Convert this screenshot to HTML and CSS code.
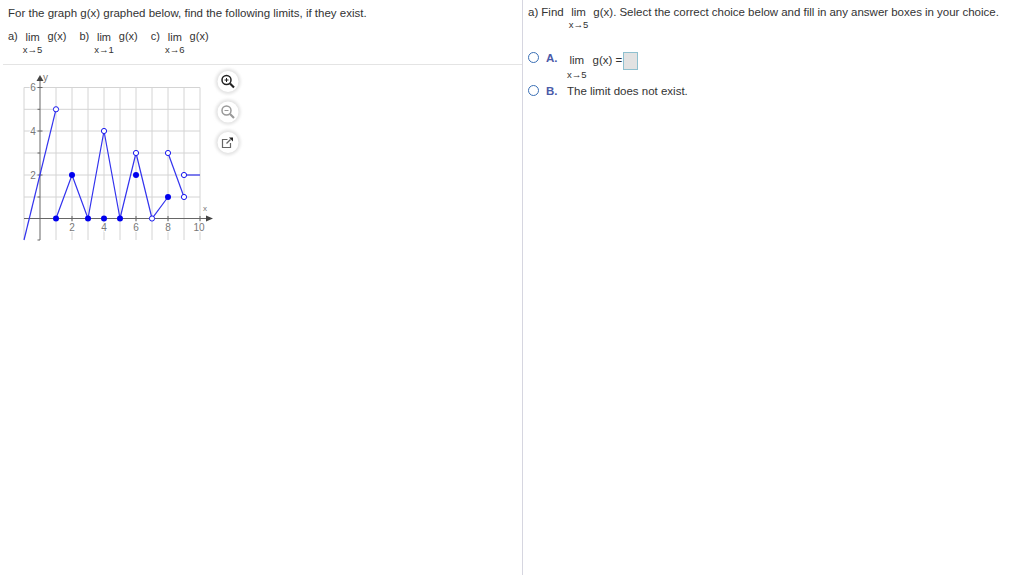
FILE: index.html
```html
<!DOCTYPE html>
<html lang="en">
<head>
  <meta charset="UTF-8">
  <title>Limits from a graph</title>
  <link rel="stylesheet" href="styles.css">
</head>
<body>
  <div class="page">
    <div class="left">
      <div class="question">
        <p class="prompt">For the graph g(x) graphed below, find the following limits, if they exist.</p>
        <div class="parts">
          <span class="part">a) <span class="lim"><span>lim</span><small>x→5</small></span> g(x)</span>
          <span class="part">b) <span class="lim"><span>lim</span><small>x→1</small></span> g(x)</span>
          <span class="part">c) <span class="lim"><span>lim</span><small>x→6</small></span> g(x)</span>
        </div>
      </div>
      <svg class="graph" width="250" height="190" viewBox="0 65 250 190">
        <defs>
          <filter id="soft" x="-30%" y="-30%" width="160%" height="160%">
            <feGaussianBlur stdDeviation="1.5"/>
          </filter>
        </defs>
        <g class="grid">
          <path d="M24 87.5H200M24 109.3H200M24 131H200M24 153H200M24 175H200M24 197H200"/>
          <path d="M24 87.5V240M56 87.5V240M72 87.5V240M88 87.5V240M104 87.5V240M120 87.5V240M136 87.5V240M152 87.5V240M168 87.5V240M184 87.5V240M200 87.5V240"/>
        </g>
        <g class="axes">
          <path d="M24 218.5H208M40 80V240"/>
          <path d="M37.500 109.300H40M37.500 131H42.500M37.500 153H40M37.500 175H42.500M37.500 197H40M37.500 240H40M37.500 87.500H42.500"/>
          <path d="M72 216V221M104 216V221M136 216V221M168 216V221M200 216V221"/>
        </g>
        <path class="arrow" d="M40 75L43.500 81H36.500Z"/>
        <path class="arrow" d="M213 218.500L206 215.500V221.500Z"/>
        <g class="labels">
          <text class="y-name" x="43" y="81">y</text>
          <text x="203" y="211">x</text>
          <text class="num" x="33" y="91" text-anchor="middle">6</text>
          <text class="num" x="33" y="135" text-anchor="middle">4</text>
          <text class="num" x="33" y="179" text-anchor="middle">2</text>
          <text class="num" x="72" y="231" text-anchor="middle">2</text>
          <text class="num" x="104" y="231" text-anchor="middle">4</text>
          <text class="num" x="136" y="231" text-anchor="middle">6</text>
          <text class="num" x="168" y="231" text-anchor="middle">8</text>
          <text class="num" x="199" y="231" text-anchor="middle">10</text>
        </g>
        <g class="curve">
          <path d="M24 240L56 109.300"/>
          <path d="M56 218.500L72 175L88 218.500L104 131L120 218.500L136 153L152 218.500L168 197"/>
          <path d="M168 153L184 197"/>
          <path d="M184 175H200"/>
        </g>
        <g class="full">
          <circle cx="56" cy="218.500" r="3"/>
          <circle cx="72" cy="175" r="3"/>
          <circle cx="88" cy="218.500" r="3"/>
          <circle cx="104" cy="218.500" r="3"/>
          <circle cx="120" cy="218.500" r="3"/>
          <circle cx="136" cy="175" r="3"/>
          <circle cx="168" cy="197" r="3"/>
        </g>
        <g class="open">
          <circle cx="56" cy="109.300" r="2.600"/>
          <circle cx="104" cy="131" r="2.600"/>
          <circle cx="136" cy="153" r="2.600"/>
          <circle cx="152" cy="218.500" r="2.600"/>
          <circle cx="168" cy="153" r="2.600"/>
          <circle cx="184" cy="175" r="2.600"/>
          <circle cx="184" cy="197" r="2.600"/>
        </g>
        <g class="tools">
          <circle class="halo" cx="228" cy="81.500" r="12.500" filter="url(#soft)"/>
          <circle class="face" cx="228" cy="81.500" r="10.500"/>
          <circle class="glass dark" cx="226.500" cy="80" r="4.500"/>
          <path class="handle dark" d="M230 83.500L234 87.500"/>
          <path class="mark dark" d="M224.500 80H228.500M226.500 78V82"/>
          <circle class="halo" cx="228" cy="112" r="12.500" filter="url(#soft)"/>
          <circle class="face" cx="228" cy="112" r="10.500"/>
          <circle class="glass grey" cx="226.500" cy="110.500" r="4.500"/>
          <path class="handle grey" d="M230 114L234 118"/>
          <path class="mark grey" d="M224.500 110.500H228.500"/>
          <circle class="halo" cx="228" cy="142.500" r="12.500" filter="url(#soft)"/>
          <circle class="face" cx="228" cy="142.500" r="10.500"/>
          <path class="popout" d="M227.500 139.500H222.500V147.500H230.500V143"/>
          <path class="popout" d="M226.500 143.500L230.500 139.500"/>
          <path class="tip" d="M229 137.500H233V141.500Z"/>
        </g>
      </svg>
    </div>
    <div class="right">
      <p class="find">a) Find <span class="lim"><span>lim</span><small>x→5</small></span> g(x). Select the correct choice below and fill in any answer boxes in your choice.</p>
      <div class="choices">
        <div class="choice choice-a">
          <span class="radio"></span>
          <span class="letter">A.</span>
          <span class="answer">
            <span class="lim"><span>lim</span><small>x→5</small></span>
            <span>g(x) =</span>
            <span class="box"></span>
          </span>
        </div>
        <div class="choice">
          <span class="radio"></span>
          <span class="letter">B.</span>
          <span>The limit does not exist.</span>
        </div>
      </div>
    </div>
  </div>
</body>
</html>
```

FILE: styles.css
```css
* {
  margin: 0;
  padding: 0;
  box-sizing: border-box;
}

body {
  font-family: "Liberation Sans", Arial, sans-serif;
  font-size: 11.5px;
  color: #333;
  background: #fff;
  overflow: hidden;
}

.page {
  display: flex;
  height: 575px;
}

.left {
  width: 523px;
  flex: none;
  border-right: 1px solid #d6d6e0;
  padding-left: 3px;
}

.question {
  height: 65px;
  padding: 6px 0 0 5px;
  border-bottom: 1px solid #e4e4e4;
}

.prompt {
  line-height: 14px;
}

.parts {
  display: flex;
  gap: 13px;
  margin-top: 10px;
  font-size: 11px;
}

.lim {
  display: inline-flex;
  flex-direction: column;
  align-items: center;
  vertical-align: top;
  margin: 0 2px;
  line-height: 14px;
}

.lim small {
  font-size: 9.5px;
  line-height: 11px;
}

.graph {
  display: block;
  margin-left: -3px;
}

.grid path {
  fill: none;
  stroke: #d4d4d4;
  stroke-width: 1;
}

.axes path {
  fill: none;
  stroke: #666;
  stroke-width: 1;
}

.arrow {
  fill: #444;
}

.labels text {
  font-size: 8px;
  fill: #777;
}

.labels .y-name {
  font-size: 10px;
}

.labels .num {
  font-size: 10px;
  stroke: #fff;
  stroke-width: 2px;
  paint-order: stroke;
}

.curve path {
  fill: none;
  stroke: #3333ee;
  stroke-width: 1.200;
}

.full circle {
  fill: #0000ee;
}

.open circle {
  fill: #fff;
  stroke: #1a1aee;
  stroke-width: 1;
}

.halo {
  fill: #e2e2e2;
}

.face {
  fill: #fff;
}

.glass {
  fill: none;
  stroke-width: 1.500;
}

.handle {
  fill: none;
  stroke-width: 2.200;
}

.mark {
  fill: none;
  stroke-width: 1;
}

.glass.dark, .handle.dark, .mark.dark {
  stroke: #222;
}

.glass.grey, .handle.grey, .mark.grey {
  stroke: #999;
}

.popout {
  fill: none;
  stroke: #666;
  stroke-width: 1.200;
}

.tip {
  fill: #222;
}

.right {
  flex: 1;
  padding: 5px 0 0 5px;
}

.find {
  line-height: 14px;
  word-spacing: -0.12px;
}

.choices {
  margin-top: 21px;
}

.choice {
  display: flex;
  align-items: flex-start;
  line-height: 14px;
}

.choice-a {
  height: 33px;
}

.radio {
  width: 11px;
  height: 11px;
  margin: 1px 0 0 0;
  border: 1.500px solid #3a6fb5;
  border-radius: 50%;
  background: #fff;
}

.letter {
  width: 21px;
  margin-left: 7px;
  font-weight: bold;
  color: #4a5aa8;
}

.answer {
  display: flex;
  align-items: flex-start;
  margin: 2px 0 0 -2px;
}

.answer small {
  margin-top: 2px;
}

.answer .lim {
  margin-right: 6px;
}

.box {
  width: 15px;
  height: 18px;
  margin: -1px 0 0 1px;
  background: #e2e2e2;
  border: 1px solid #8fc0cf;
}
```
